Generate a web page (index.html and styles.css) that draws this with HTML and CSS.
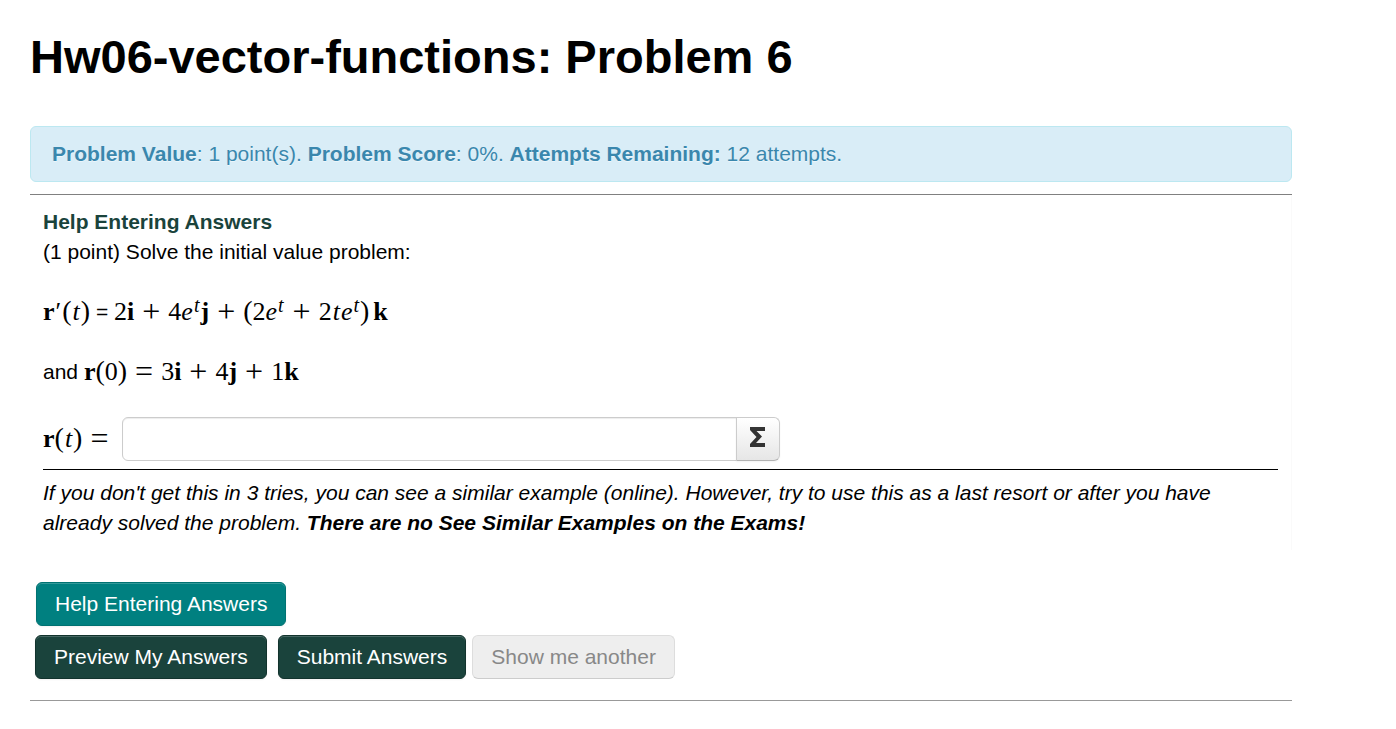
FILE: index.html
```html
<!doctype html>
<html lang="en">
<head>
<meta charset="utf-8">
<title>Hw06-vector-functions: Problem 6</title>
<link rel="stylesheet" href="styles.css">
</head>
<body>
<main>
<h1>Hw06-vector-functions: Problem 6</h1>
<div class="alert"><b>Problem Value</b>: 1 point(s). <b>Problem Score</b>: 0%. <b>Attempts Remaining:</b> 12 attempts.</div>
<form>
<section class="problem">
<a href="#help" class="help-link">Help Entering Answers</a>
<p>(1 point) Solve the initial value problem:</p>
<p class="eq"><span class="math"><b>r</b><span class="prime">′</span><span class="par">(</span><i class="var">t</i><span class="par">)</span></span> = <span class="math">2<b>i</b><span class="op">+</span>4<i>e</i><sup>t</sup><b>j</b><span class="op">+</span><span class="par">(</span>2<i>e</i><sup>t</sup><span class="op">+</span>2<i class="var">t</i><i>e</i><sup>t</sup><span class="par">)</span><b class="thin">k</b></span></p>
<p class="eq">and <span class="math"><b>r</b><span class="par">(</span>0<span class="par">)</span><span class="op">=</span>3<b>i</b><span class="op">+</span>4<b>j</b><span class="op">+</span>1<b>k</b></span></p>
<div class="answer">
<label for="ans" class="math"><b>r</b><span class="par">(</span><i class="var">t</i><span class="par">)</span><span class="op">=</span></label>
<input type="text" id="ans">
<button type="button" class="sigma" aria-label="Equation editor">
<svg width="16" height="20" viewBox="0 0 16 20"><path d="M0 0H15V4H6.500L12 9.500L6 16H15V20H0V17L6.500 10L0 3Z"/></svg>
</button>
</div>
<hr>
<p class="note">If you don't get this in 3 tries, you can see a similar example (online). However, try to use this as a last resort or after you have already solved the problem. <b>There are no See Similar Examples on the Exams!</b></p>
</section>
<div class="buttons">
<button type="button" class="btn teal">Help Entering Answers</button>
</div>
<div class="buttons">
<button type="button" class="btn">Preview My Answers</button>
<button type="button" class="btn">Submit Answers</button>
<button type="button" class="btn another" disabled>Show me another</button>
</div>
</form>
</main>
</body>
</html>
```
FILE: styles.css
```css
body {
	margin: 0;
	background: #fff;
	color: #000;
	font-family: "Liberation Sans", Arial, sans-serif;
	font-size: 21px;
	line-height: 30px;
}
main {
	padding: 27px 104px 28px 30px;
}
h1 {
	margin: 0 0 39px;
	font-size: 47px;
	line-height: 60px;
}
.alert {
	padding: 12px 21px;
	border: 1px solid #bce8f1;
	border-radius: 6px;
	background: #d9edf7;
	color: #3a87ad;
	text-shadow: 0 1px 0 rgba(255,255,255,0.5);
}
form {
	margin-top: 12px;
	padding-bottom: 21px;
	border-top: 1px solid #808080;
	border-bottom: 1px solid #999;
}
.problem {
	padding: 12px 13px;
	margin-bottom: 32px;
	border-right: 1px solid #fafafa;
}
.help-link {
	display: block;
	color: #1a433c;
	font-weight: bold;
	text-decoration: none;
}
p {
	margin: 0;
}
.eq {
	margin-top: 30px;
}
/* formulas */
.math {
	font-family: "Liberation Serif", "Times New Roman", serif;
	font-size: 26px;
	line-height: 1;
	vertical-align: -1px;
	white-space: nowrap;
}
.math sup {
	font-size: 20px;
	font-style: italic;
	line-height: 1px;
	vertical-align: 8px;
	padding: 0 1px;
}
.math .prime {
	padding: 0 1px;
	line-height: 1px;
}
.math .var {
	padding: 0 1px;
}
.math .par {
	font-size: 28px;
	line-height: 1px;
}
.math .op {
	margin: 0 8px;
	font-size: 32px;
	line-height: 1px;
	vertical-align: -2px;
}
.math .thin {
	margin-left: 4px;
}
.answer {
	display: flex;
	align-items: center;
	margin-top: 30px;
}
.answer input {
	box-sizing: border-box;
	width: 615px;
	height: 44px;
	margin: 0 0 0 6px;
	padding: 6px 9px;
	border: 1px solid #ccc;
	border-radius: 6px 0 0 6px;
	box-shadow: inset 0 1px 1px rgba(0,0,0,0.075);
	font: inherit;
}
.sigma {
	display: flex;
	align-items: center;
	justify-content: center;
	width: 44px;
	height: 44px;
	margin-left: -1px;
	padding: 0 0 4px;
	border: 1px solid #ccc;
	border-bottom-color: #b3b3b3;
	border-radius: 0 6px 6px 0;
	background: linear-gradient(#fff, #e6e6e6);
	box-shadow: 0 1px 2px rgba(0,0,0,0.05);
}
.sigma svg {
	fill: #333;
}
hr {
	height: 1px;
	margin: 8px 0;
	border: 0;
	background: #000;
}
.note {
	font-style: italic;
}
.buttons {
	display: flex;
	margin: 9px 0 0 5px;
}
.btn {
	height: 44px;
	margin-right: 11px;
	padding: 0 18px;
	border: 1px solid #12332d;
	border-radius: 6px;
	background: #1a433c;
	box-shadow: inset 0 1px 0 rgba(255,255,255,0.2), 0 1px 2px rgba(0,0,0,0.05);
	color: #fff;
	font: inherit;
}
.teal {
	margin-left: 1px;
	border-color: #007272;
	background: #008080;
}
.another {
	margin-left: -5px;
	border-color: #ddd;
	border-bottom-color: #ccc;
	background: #eee;
	box-shadow: none;
	color: #888;
}
```
